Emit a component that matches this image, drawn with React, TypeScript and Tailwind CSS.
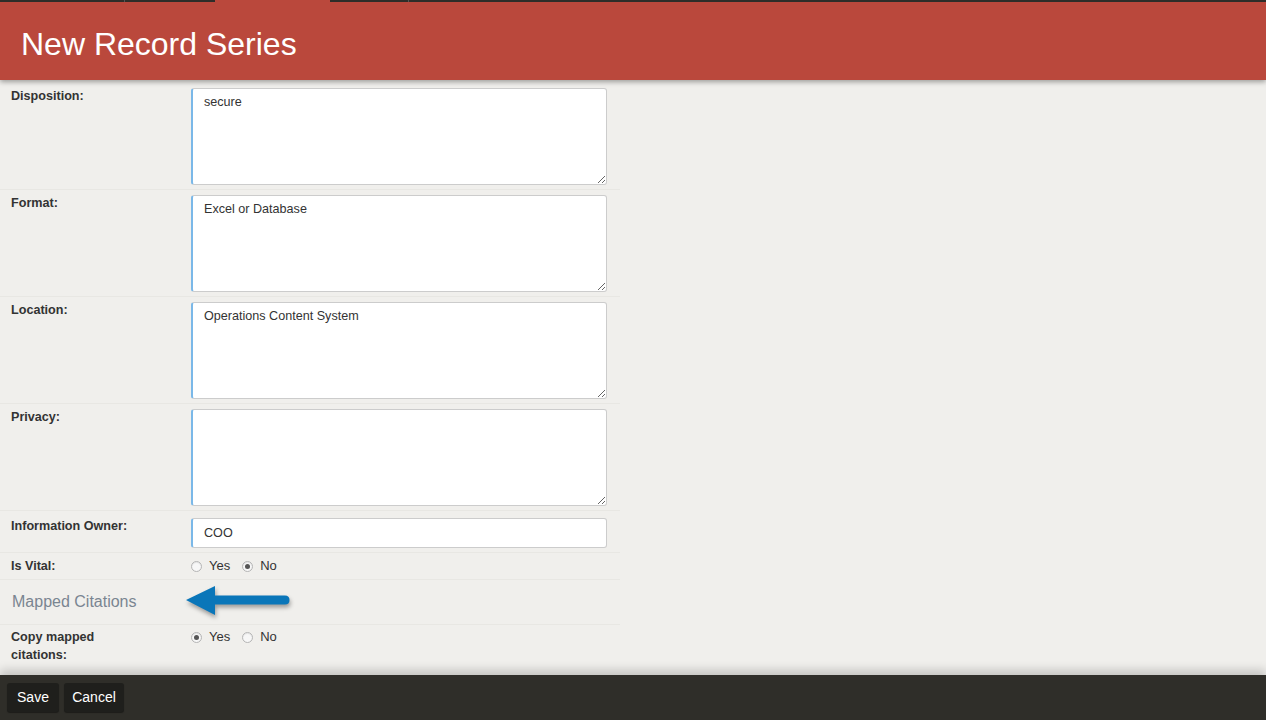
// @ts-nocheck
import React from 'react';

const Radio = ({ checked }) => (
  <span className="inline-flex h-[11px] w-[11px] items-center justify-center rounded-full border border-[#b5b5b5] bg-[#f7f7f7] shadow-[inset_0_1px_1px_rgba(0,0,0,0.08)]">
    {checked && <span className="h-[5px] w-[5px] rounded-full bg-[#555]" />}
  </span>
);

const RadioPair = ({ value }) => (
  <div className="flex h-[18px] items-center text-[13px] leading-[18px] text-[#333]">
    <Radio checked={value === 'yes'} />
    <span className="ml-[7px]">Yes</span>
    <span className="ml-[12px] flex"><Radio checked={value === 'no'} /></span>
    <span className="ml-[7px]">No</span>
  </div>
);

const Label = ({ children }) => (
  <div className="w-[191px] shrink-0 pl-[11px] pr-6 text-[12.6px] font-bold leading-[18px] text-[#333]">{children}</div>
);

const AreaRow = ({ label, value, first }) => (
  <div className={`flex border-[#e8e7e3] pb-[4px] pt-[5px] ${first ? '' : 'border-t'}`}>
    <Label><div className="-mt-[1px]">{label}</div></Label>
    <textarea
      defaultValue={value}
      className="h-[97px] w-[416px] resize-y rounded-[3px] border border-[#ccc] border-l-2 border-l-[#7ab8e8] bg-white px-[11px] py-[4px] text-[12.6px] leading-[18px] text-[#333] outline-none"
    />
  </div>
);

const Arrow = () => (
  <svg width="110" height="34" viewBox="0 0 110 34" className="drop-shadow-[1px_3px_2px_rgba(0,0,0,0.35)]">
    <path d="M1 15 L30 1 L30 10.5 L100 10.5 Q104.5 10.5 104.5 15 Q104.5 19.5 100 19.5 L30 19.5 L30 30 Z" fill="#0a76b9" />
  </svg>
);

export default function App() {
  return (
    <div className="flex h-[720px] w-[1266px] flex-col overflow-hidden bg-[#f0efec] font-['Liberation_Sans',Arial,sans-serif]">
      <div className="relative z-20 h-[80px] shrink-0 bg-[#ba483c] shadow-[0_2px_5px_rgba(0,0,0,0.35)]">
        <div className="flex h-[2px]">
          <div className="w-[124px] bg-[#2e2d29]" />
          <div className="w-[1px] bg-[#555]" />
          <div className="w-[90px] bg-[#2e2d29]" />
          <div className="w-[115px]" />
          <div className="w-[78px] bg-[#2e2d29]" />
          <div className="w-[1px] bg-[#555]" />
          <div className="flex-1 bg-[#2e2d29]" />
        </div>
        <h1 className="pl-[21px] pt-[23px] text-[32px] leading-[38px] text-white">New Record Series</h1>
      </div>

      <div className="relative z-0 flex-1 overflow-hidden pt-[3px]">
        <div className="w-[620px]">
          <AreaRow first label="Disposition:" value="secure" />
          <AreaRow label="Format:" value="Excel or Database" />
          <AreaRow label="Location:" value="Operations Content System" />
          <AreaRow label="Privacy:" value="" />
          <div className="flex border-t border-[#e8e7e3] pb-[4px] pt-[7px]">
            <Label><div className="-mt-[1px]">Information Owner:</div></Label>
            <input
              defaultValue="COO"
              className="h-[30px] w-[416px] rounded-[3px] border border-[#ccc] border-l-2 border-l-[#7ab8e8] bg-white px-[11px] text-[12.6px] text-[#333] outline-none"
            />
          </div>
          <div className="flex items-center border-t border-[#e8e7e3] py-[4px]">
            <Label>Is Vital:</Label>
            <RadioPair value="no" />
          </div>
          <div className="flex h-[45px] items-center border-t border-[#e8e7e3]">
            <div className="w-[185px] shrink-0 pl-[12px] text-[16px] text-[#7a8591]">Mapped Citations</div>
            <Arrow />
          </div>
          <div className="flex items-start border-t border-[#e8e7e3] pt-[3px]">
            <Label>Copy mapped<br />citations:</Label>
            <RadioPair value="yes" />
          </div>
        </div>
      </div>

      <div className="relative z-20 flex h-[45px] shrink-0 items-center gap-[5px] bg-[#2f2e29] pl-[7px] shadow-[0_-5px_9px_rgba(0,0,0,0.18)]">
        <button className="h-[29px] w-[52px] rounded-[3px] bg-[#1f1f1c] text-[14px] text-white shadow-[0_1px_1px_rgba(0,0,0,0.4)]">Save</button>
        <button className="h-[29px] w-[60px] rounded-[3px] bg-[#1f1f1c] text-[14px] text-white shadow-[0_1px_1px_rgba(0,0,0,0.4)]">Cancel</button>
      </div>
    </div>
  );
}
